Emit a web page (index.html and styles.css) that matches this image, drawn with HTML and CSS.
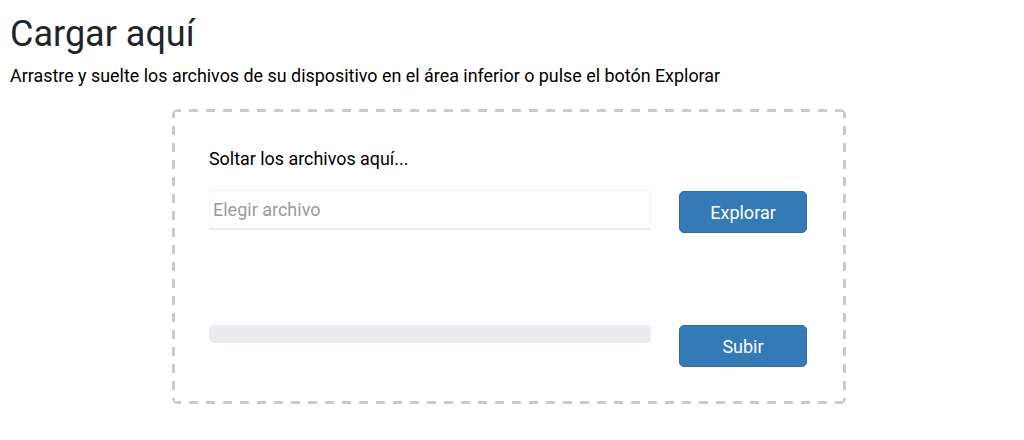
FILE: index.html
```html
<!DOCTYPE html>
<html lang="es">
<head>
    <meta charset="UTF-8">
    <meta name="viewport" content="width=device-width, initial-scale=1.0">
    <title>Cargar aquí</title>
    <link rel="stylesheet" href="styles.css">
</head>
<body>
    <h1 class="title">Cargar aquí</h1>
    <p class="subtitle">Arrastre y suelte los archivos de su dispositivo en el área inferior o pulse el botón Explorar</p>

    <div class="dropZone">
        <p class="dropText">Soltar los archivos aquí...</p>

        <div class="row">
            <input type="text" class="fileName" placeholder="Elegir archivo" readonly>
            <button class="btn">Explorar</button>
        </div>

        <div class="row rowUpload">
            <div class="progress"><div class="bar"></div></div>
            <button class="btn">Subir</button>
        </div>
    </div>
</body>
</html>
```

FILE: styles.css
```css
*{
    margin: 0;
    padding: 0;
    box-sizing: border-box;
}
body{
    padding: 10px;
    font-family: Roboto, "Liberation Sans", Arial, sans-serif;
    font-size: 17.9px;
    color: #000;
    background: #fff;
}
.title{
    font-size: 36px;
    font-weight: 400;
    line-height: 44px;
    color: #212529;
    margin-top: 2px;
}
.subtitle{
    margin-top: 8px;
    line-height: 24px;
}
/* 虚线框: 用渐变画, 虚线长度 9px 间隔 8px */
.dropZone{
    width: 674px;
    margin: 21px 0 0 162px;
    border-radius: 6px;
    padding: 38px 39px 37px 37px;
    background:
        repeating-linear-gradient(90deg, #cacaca 0 9px, transparent 9px 17px) left top / 100% 3px no-repeat,
        repeating-linear-gradient(90deg, #cacaca 0 9px, transparent 9px 17px) left bottom / 100% 3px no-repeat,
        repeating-linear-gradient(180deg, #cacaca 0 9px, transparent 9px 17px) left top / 3px 100% no-repeat,
        repeating-linear-gradient(180deg, #cacaca 0 9px, transparent 9px 17px) right top / 3px 100% no-repeat;
}
.dropText{
    line-height: 24px;
    margin-bottom: 19px;
}
.row{
    display: flex;
    align-items: flex-start;
    gap: 28px;
}
.rowUpload{
    margin-top: 92px;
}
.fileName{
    flex: 1;
    height: 40px;
    border: 1px solid #f5f5f5;
    border-bottom: 2px solid #ebebeb;
    outline: none;
    padding: 0 3px;
    font-family: inherit;
    font-size: 18px;
    color: #333;
    background: #fff;
}
.fileName::placeholder{
    color: #9a9a9a;
}
.progress{
    flex: 1;
    height: 18px;
    border-radius: 5px;
    background: #ebecf0;
    overflow: hidden;
}
.bar{
    width: 0;
    height: 100%;
    background: #337ab7;
}
.btn{
    width: 128px;
    height: 42px;
    margin-top: 1px;
    background: #337ab7;
    border: 1px solid #2e6da4;
    border-radius: 5px;
    color: #fff;
    font-family: inherit;
    font-size: 18px;
    cursor: pointer;
}
.rowUpload .btn{
    margin-top: 0;
}
.btn:hover{
    background: #286090;
}
```
